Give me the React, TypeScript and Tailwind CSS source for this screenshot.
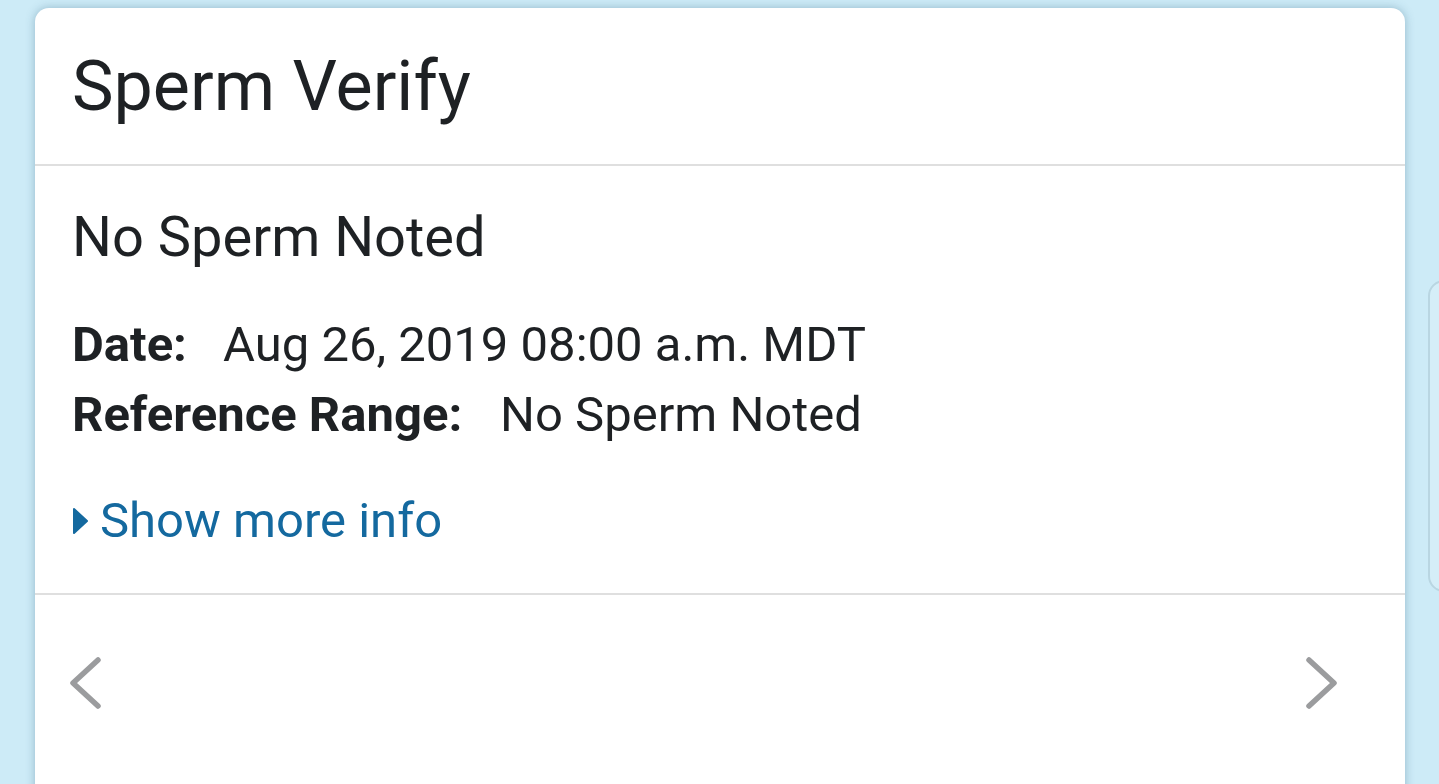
const RESULT = {
  title: 'Sperm Verify',
  value: 'No Sperm Noted',
  date: 'Aug 26, 2019 08:00 a.m. MDT',
  range: 'No Sperm Noted',
};

const Chevron = ({ dir }: { dir: 'left' | 'right' }) => (
  <svg width="32" height="52" viewBox="0 0 32 52" fill="none">
    <polyline
      points={dir === 'left' ? '28,3 3,26 28,49' : '4,3 29,26 4,49'}
      stroke="#9b9c9e"
      strokeWidth="5.5"
      strokeLinecap="round"
      strokeLinejoin="round"
    />
  </svg>
);

const ResultCard = () => {
  return (
    <div className="w-[1370px] min-h-[820px] shrink-0 rounded-t-[14px] bg-white text-[#1e2124] shadow-[0_0_10px_rgba(40,90,120,0.35)]">
      <div className="h-[156px] flex items-center px-[37px]">
        <h1 className="text-[70px] leading-none">{RESULT.title}</h1>
      </div>

      <div className="h-[2px] bg-[#dfdfdf]" />

      <div className="px-[37px] pt-[39px] pb-[42px]">
        <p className="text-[56px] leading-[64px]">{RESULT.value}</p>

        <div className="mt-[41px] text-[49px]">
          <div className="flex leading-[70px]">
            <span className="font-bold w-[151px]">Date:</span>
            <span>{RESULT.date}</span>
          </div>
          <div className="flex leading-[70px]">
            <span className="font-bold w-[428px]">Reference Range:</span>
            <span>{RESULT.range}</span>
          </div>
        </div>

        <button className="mt-[41px] flex items-center gap-[12px] text-[#14699f] text-[49px] leading-[60px]">
          <svg width="16" height="28" viewBox="0 0 16 28">
            <path d="M2 2 L15 14 L2 26 Z" fill="#14699f" stroke="#14699f" strokeWidth="2" strokeLinejoin="round" />
          </svg>
          <span>Show more info</span>
        </button>
      </div>

      <div className="h-[2px] bg-[#dfdfdf]" />

      <div className="flex items-center justify-between pl-[35px] pr-[68px] pt-[62px]">
        <Chevron dir="left" />
        <Chevron dir="right" />
      </div>
    </div>
  );
};

export default function App() {
  return (
    <div
      className="h-[784px] w-full overflow-hidden bg-[#cdebf7] flex items-start gap-[23px] pt-[8px] pl-[35px]"
      style={{ fontFamily: 'Roboto, "Noto Sans", sans-serif' }}
    >
      <ResultCard />
      <div className="mt-[272px] h-[312px] w-[200px] shrink-0 rounded-[16px] border-2 border-[#b9d6e2] bg-[#d5eef8]" />
    </div>
  );
}
